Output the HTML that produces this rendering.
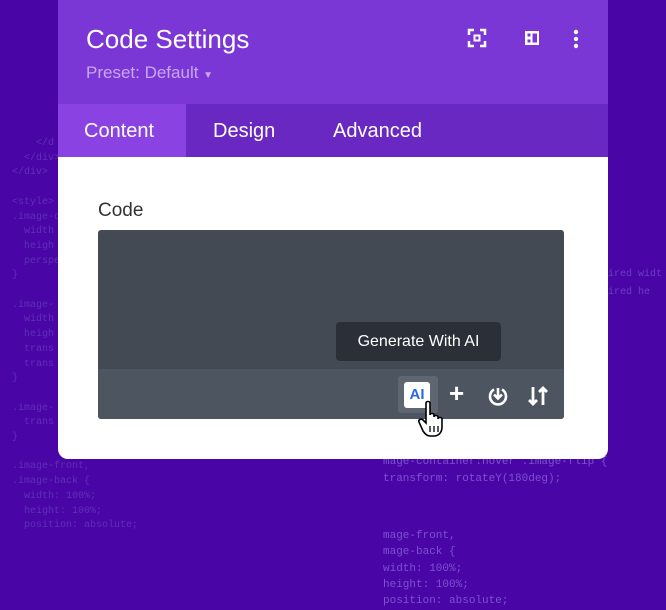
<!DOCTYPE html><html><head><style>
html,body{margin:0;width:666px;height:610px;overflow:hidden}
body{background:#4a05a6;position:relative;font-family:"Liberation Sans",sans-serif}
.code{position:absolute;font-family:"Liberation Mono",monospace;font-size:10px;color:#6f44c6;white-space:pre}
.modal{position:absolute;left:58px;top:0;width:550px;height:459px;background:#fff;border-radius:0 0 10px 10px;overflow:hidden}
.hdr{height:104px;background:#7b37d5;position:relative}
.t{position:absolute;left:28px;top:24px;color:#fff;font-size:26px}
.p{position:absolute;left:28px;top:63px;color:#c8a6f0;font-size:17px}
.tabs{height:53px;background:#6a28c2;position:relative;color:#fff;font-size:20px}
.tabs div{position:absolute;top:16px}
.ed{position:absolute;left:40px;top:230px;width:466px;height:189px;background:#434a53;border-radius:3px;overflow:hidden}
.tb{position:absolute;left:0;bottom:0;width:100%;height:50px;background:#4d5560}
</style></head><body>
<div class="code" style="left:0;top:137px;line-height:14.7px;color:#5f30b8">      &lt;/d
    &lt;/div&gt;
  &lt;/div&gt;

  &lt;style&gt;
  .image-c
    width
    heigh
    perspe
  }

  .image-
    width
    heigh
    trans
    trans
  }

  .image-
    trans
  }

  .image-front,
  .image-back {
    width: 100%;
    height: 100%;
    position: absolute;</div>
<div class="code" style="left:383px;top:454px;line-height:16.5px;font-size:11px;color:#7c52d0">mage-container:hover .image-flip {
transform: rotateY(180deg);</div>
<div class="code" style="left:383px;top:528px;line-height:16.3px;font-size:11px;color:#7c52d0">mage-front,
mage-back {
width: 100%;
height: 100%;
position: absolute;</div>
<div class="code" style="left:608px;top:266px;line-height:18px;color:#6a3fc4">ired widt
ired he</div>
<div class="modal">
 <div class="hdr"><div class="t">Code Settings</div><div class="p">Preset: Default <span style="font-size:10px">▼</span></div>
  <svg style="position:absolute;left:409px;top:28px" width="20" height="20" viewBox="0 0 20 20" fill="none" stroke="#fff" stroke-width="2.5"><path d="M2 7V2h5M13 2h5v5M18 13v5h-5M7 18H2v-5"/><rect x="7.5" y="7.5" width="5" height="5" stroke-width="2"/></svg>
  <svg style="position:absolute;left:466px;top:30px" width="16" height="16" viewBox="0 0 16 16"><rect x="1" y="1" width="14" height="14" fill="#fff"/><rect x="3.5" y="3.5" width="3" height="3" fill="#7b37d5"/><rect x="3.5" y="9.5" width="3" height="3" fill="#7b37d5"/><rect x="8.5" y="3.5" width="4.5" height="9" fill="#7b37d5"/></svg>
  <svg style="position:absolute;left:514px;top:29px" width="8" height="20"><circle cx="4" cy="3" r="2.2" fill="#fff"/><circle cx="4" cy="10" r="2.2" fill="#fff"/><circle cx="4" cy="17" r="2.2" fill="#fff"/></svg>
 </div>
 <div class="tabs"><div style="left:0;top:0;width:128px;height:53px;background:#8a43e2"></div><div style="left:26px">Content</div><div style="left:155px">Design</div><div style="left:275px">Advanced</div></div>
 <div style="position:absolute;left:40px;top:200px;font-size:19px;color:#333">Code</div>
 <div class="ed"><div class="tb"></div>
  <div style="position:absolute;left:238px;top:92px;width:165px;height:39px;background:#2b3038;border-radius:4px;color:#fff;font-size:16px;line-height:39px;text-align:center">Generate With AI</div>
  <div style="position:absolute;left:300px;top:146px;width:40px;height:37px;background:#5e6671;border-radius:3px"></div>
  <div style="position:absolute;left:306px;top:152px;width:26px;height:26px;background:#fff;border-radius:3px;font-weight:bold;font-size:15px;line-height:26px;text-align:center;color:#2b68e8">AI</div>
  <div style="position:absolute;left:351px;top:150px;color:#fff;font-size:26px;font-weight:bold;line-height:26px">+</div>
  <svg style="position:absolute;left:389px;top:155px" width="22" height="22" viewBox="0 0 22 22" fill="none" stroke="#fff" stroke-width="2.6"><path d="M7 4.5A8 8 0 1 0 15 4.5"/><path d="M11 3v10M7 9.5l4 4 4-4"/></svg>
  <svg style="position:absolute;left:429px;top:155px" width="22" height="22" viewBox="0 0 22 22" fill="none" stroke="#fff" stroke-width="2.8"><path d="M6 2v17M2 15l4 4 4-4M16 20V3M12 7l4-4 4 4"/></svg>
 </div>
 <svg style="position:absolute;left:360px;top:400px" width="32" height="40" viewBox="0 0 32 40"><path d="M8 3c0-2 4-2 4 0v12c0-2 4-2 4 0v2c0-2 4-2 4 0v2c0-2 4-2 4 0v8c0 5-3 9-8 9h-4c-3 0-5-2-7-5L1 22c-1-2 2-4 4-2l3 3z" fill="#fff" stroke="#000" stroke-width="1.6"/><path d="M12 26v6M16 26v6M20 26v6" stroke="#000" stroke-width="1.3"/></svg>
</div>
</body></html>
